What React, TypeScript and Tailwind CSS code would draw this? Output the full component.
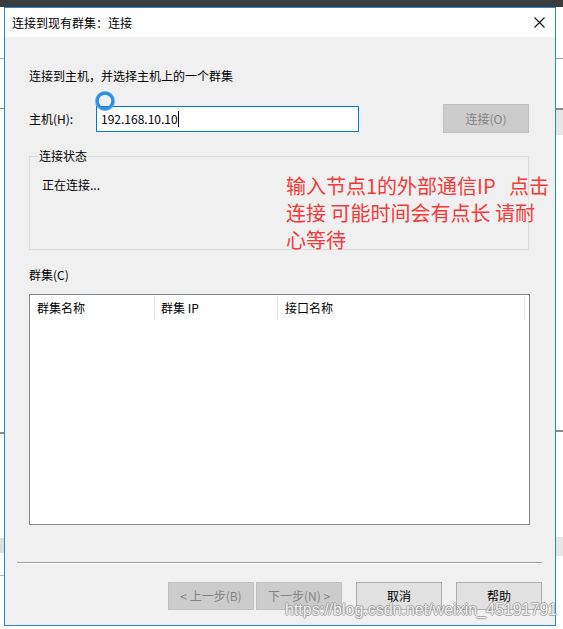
import React from "react";

const cjk = { fontFamily: '"Noto Sans CJK SC", "Noto Sans", sans-serif' };

function CloseIcon() {
  return (
    <svg width="11" height="11" viewBox="0 0 11 11" className="block">
      <path d="M0.5 0.5 L10.5 10.5 M10.5 0.5 L0.5 10.5" stroke="#111" strokeWidth="1.1" />
    </svg>
  );
}

function BusyRing() {
  return (
    <svg width="22" height="22" viewBox="0 0 22 22" className="block">
      <circle cx="11" cy="11" r="8" fill="none" stroke="#2b8fe6" strokeWidth="3.6" />
      <circle cx="11" cy="11" r="9.6" fill="none" stroke="#8cc4f2" strokeWidth="0.8" opacity="0.7" />
    </svg>
  );
}

function WizardButton({ label, disabled }: { label: string; disabled?: boolean }) {
  return (
    <div
      className={
        disabled
          ? "w-[86px] h-[28px] flex items-center justify-center border border-[#bfbfbf] bg-[#cccccc] text-[#838383] text-[12px] leading-[14px]"
          : "w-[86px] h-[28px] flex items-center justify-center border border-[#adadad] bg-[#e1e1e1] text-black text-[12px] leading-[14px]"
      }
    >
      {label}
    </div>
  );
}

export default function App() {
  return (
    <div className="relative w-[563px] h-[629px] overflow-hidden bg-white" style={cjk}>
      {/* window behind the dialog */}
      <div className="h-[7px] bg-[#3d3d3d]" />
      <div className="absolute right-0 top-[7px] w-[7px] h-[622px] bg-white flex flex-col">
        <div className="h-[51px]" />
        <div className="h-[1px] bg-[#a0a0a0]" />
        <div className="h-[49px] bg-white" />
        <div className="h-[2px] bg-[#8a8a8a]" />
        <div className="h-[25px] bg-[#e6e6e6]" />
        <div className="h-[295px]" />
        <div className="h-[2px] bg-[#8a8a8a]" />
        <div className="h-[105px]" />
        <div className="h-[19px] bg-[#e6e6e6]" />
      </div>
      <div className="absolute left-0 top-[7px] w-[4px] h-[622px] flex flex-col">
        <div className="h-[51px]" />
        <div className="h-[1px] bg-[#b5b5b5]" />
        <div className="h-[49px]" />
        <div className="h-[1px] bg-[#8a8a8a]" />
        <div className="h-[323px]" />
        <div className="h-[2px] bg-[#8a8a8a]" />
        <div className="h-[104px]" />
        <div className="h-[15px] bg-[#dedede]" />
        <div className="h-[22px]" />
        <div className="h-[1px] bg-[#b5b5b5]" />
      </div>

      {/* dialog */}
      <div className="relative ml-[4px] w-[552px] h-[619px] border border-[#2a86d6] flex flex-col bg-[#f0f0f0]">
        {/* title bar */}
        <div className="h-[29px] bg-white flex items-center pl-[7px] pr-[10px] shrink-0">
          <span className="text-[12px] leading-[14px] text-black">连接到现有群集：连接</span>
          <div className="ml-auto">
            <CloseIcon />
          </div>
        </div>

        {/* body */}
        <div className="relative flex-1 flex flex-col">
          <div className="ml-[24px] w-[501px] flex flex-col">
            <p className="mt-[32px] text-[12px] leading-[14px] text-black">连接到主机，并选择主机上的一个群集</p>

            <div className="mt-[21px] h-[29px] flex items-center">
              <span className="w-[67px] text-[12px] leading-[14px] text-black">主机(H):</span>
              <div className="relative w-[263px] h-[26px] border border-[#0078d7] bg-white flex items-center pl-[4px]">
                <span className="text-[12px] leading-[14px] text-black">192.168.10.10</span>
                <span className="w-[1px] h-[16px] bg-black" />
                <div className="absolute left-[-3px] top-[-17px]">
                  <BusyRing />
                </div>
              </div>
              <div className="ml-auto mr-[1px] w-[86px] h-[29px] flex items-center justify-center border border-[#bfbfbf] bg-[#cccccc] text-[#838383] text-[12px] leading-[14px]">
                连接(O)
              </div>
            </div>

            {/* status group */}
            <div className="relative mt-[23px] mr-[1px] h-[94px] border border-[#dcdcdc]">
              <span className="absolute left-[8px] top-[-8px] px-[1px] bg-[#f0f0f0] text-[12px] leading-[14px] text-black">
                连接状态
              </span>
              <p className="mt-[21px] ml-[12px] text-[12px] leading-[14px] text-black">正在连接...</p>
              <div className="absolute left-[256px] top-[15px] w-[270px] text-[20px] leading-[27px] text-[#f23b3b] whitespace-pre">
                {"输入节点1的外部通信IP   点击\n连接 可能时间会有点长 请耐\n心等待"}
              </div>
            </div>

            <p className="mt-[18px] text-[12px] leading-[14px] text-black">群集(C)</p>

            {/* cluster list */}
            <div className="mt-[12px] h-[231px] border border-[#828790] bg-white">
              <div className="flex h-[25px] items-center text-[12px] leading-[14px] text-black">
                <div className="w-[125px] h-full flex items-center pl-[7px] border-r border-[#e5e5e5]">群集名称</div>
                <div className="w-[123px] h-full flex items-center pl-[6px] border-r border-[#e5e5e5]">群集 IP</div>
                <div className="w-[247px] h-full flex items-center pl-[7px] border-r border-[#e5e5e5]">接口名称</div>
              </div>
            </div>
          </div>

          {/* footer */}
          <div className="mt-[37px] ml-[12px] w-[525px] border-t border-[#a0a0a0] border-b border-b-white" />
          <div className="mt-[18px] ml-[163px] flex">
            <WizardButton label="< 上一步(B)" disabled />
            <div className="ml-[2px]">
              <WizardButton label="下一步(N) >" disabled />
            </div>
            <div className="ml-[14px]">
              <WizardButton label="取消" />
            </div>
            <div className="ml-[14px]">
              <WizardButton label="帮助" />
            </div>
          </div>
        </div>
      </div>

      {/* blog watermark */}
      <div
        className="absolute left-[285px] top-[600px] text-[16px] leading-[20px] text-[#f2f2f2] whitespace-nowrap"
        style={{
          fontFamily: '"Liberation Sans", Arial, sans-serif',
          textShadow:
            "1px 0 0 rgba(130,130,130,0.6), -1px 0 0 rgba(130,130,130,0.6), 0 1px 0 rgba(130,130,130,0.6), 0 -1px 0 rgba(130,130,130,0.6)",
        }}
      >
        https://blog.csdn.net/weixin_45191791
      </div>
    </div>
  );
}
